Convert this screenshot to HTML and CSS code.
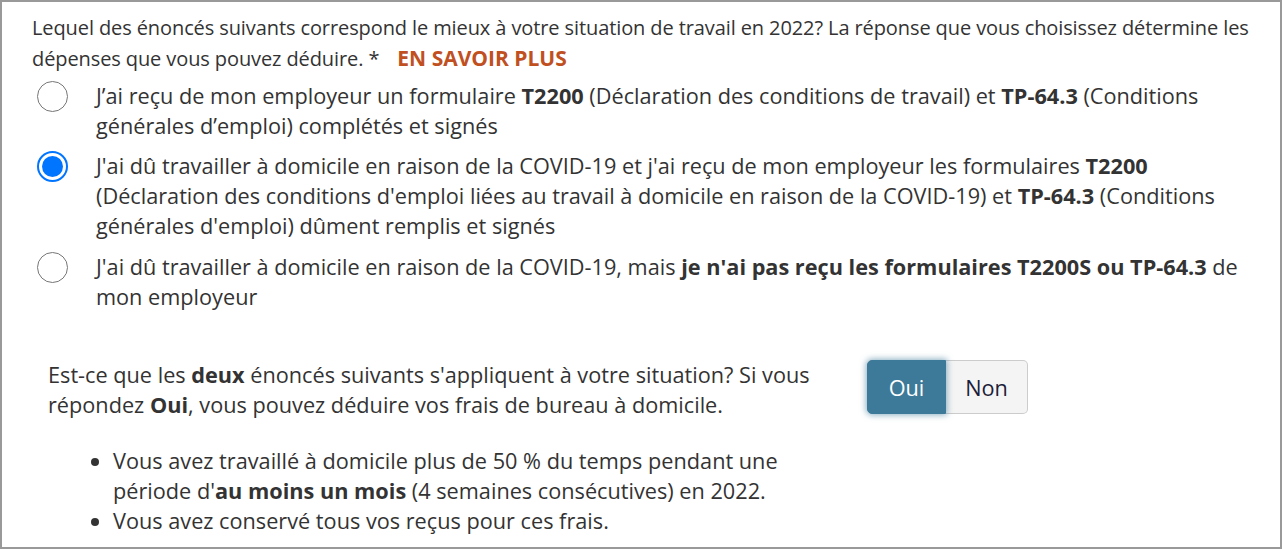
FILE: index.html
```html
<!DOCTYPE html>
<html lang="fr">
<head>
<meta charset="utf-8">
<title>Bureau à domicile</title>
<link rel="stylesheet" href="styles.css">
</head>
<body>
<div class="frame">
  <p class="question">Lequel des énoncés suivants correspond le mieux à votre situation de travail en 2022? La réponse que vous choisissez détermine les dépenses que vous pouvez déduire. *<a class="learn" href="#">EN SAVOIR PLUS</a></p>
  <div class="options">
    <label class="option">
      <span class="radio"></span>
      <span class="option-text">J’ai reçu de mon employeur un formulaire <b>T2200</b> (Déclaration des conditions de travail) et <b>TP-64.3</b> (Conditions générales d’emploi) complétés et signés</span>
    </label>
    <label class="option">
      <span class="radio checked"></span>
      <span class="option-text">J'ai dû travailler à domicile en raison de la COVID-19 et j'ai reçu de mon employeur les formulaires <b>T2200</b> (Déclaration des conditions d'emploi liées au travail à domicile en raison de la COVID-19) et <b>TP-64.3</b> (Conditions générales d'emploi) dûment remplis et signés</span>
    </label>
    <label class="option option-last">
      <span class="radio"></span>
      <span class="option-text">J'ai dû travailler à domicile en raison de la COVID-19, mais <b>je n'ai pas reçu les formulaires T2200S ou TP-64.3</b> de mon employeur</span>
    </label>
  </div>
  <div class="followup">
    <div class="followup-text">
      <p class="desc">Est-ce que les <b>deux</b> énoncés suivants s'appliquent à votre situation? Si vous répondez <b>Oui</b>, vous pouvez déduire vos frais de bureau à domicile.</p>
      <ul class="conditions">
        <li>Vous avez travaillé à domicile plus de 50 % du temps pendant une période d'<b>au moins un mois</b> (4 semaines consécutives) en 2022.</li>
        <li>Vous avez conservé tous vos reçus pour ces frais.</li>
      </ul>
    </div>
    <div class="toggle">
      <button class="btn btn-yes" type="button">Oui</button>
      <button class="btn btn-no" type="button">Non</button>
    </div>
  </div>
</div>
</body>
</html>
```
FILE: styles.css
```css
html, body {
  margin: 0;
  padding: 0;
  background: #fff;
}
body {
  font-family: "Open Sans", "Noto Sans", sans-serif;
  color: #333;
  font-size: 21.7px;
  line-height: 30px;
}
.frame {
  box-sizing: border-box;
  width: 1282px;
  height: 549px;
  border: 2px solid #999;
  padding: 11px 20px 0 30px;
  overflow: hidden;
}
.question {
  margin: 0;
  font-size: 20px;
  letter-spacing: -0.1px;
}
.learn {
  color: #c0501f;
  font-weight: 700;
  font-size: 21px;
  letter-spacing: 0;
  text-decoration: none;
  margin-left: 18px;
}
.options {
  display: flex;
  flex-direction: column;
  gap: 10px;
  margin-top: 7px;
}
.option {
  display: flex;
  align-items: flex-start;
}
.option-last {
  margin-top: 1px;
}
.radio {
  flex: none;
  box-sizing: border-box;
  width: 31px;
  height: 31px;
  margin: 0 28px 0 5px;
  border: 1.5px solid #767676;
  border-radius: 50%;
  background: #fff;
}
.radio.checked {
  border: 2.5px solid #0075ff;
  position: relative;
}
.radio.checked::after {
  content: "";
  position: absolute;
  left: 3px;
  top: 3px;
  right: 3px;
  bottom: 3px;
  border-radius: 50%;
  background: #0075ff;
}
.option-text b {
  font-weight: 700;
}
.followup {
  display: flex;
  align-items: flex-start;
  margin-top: 48px;
  padding-left: 16px;
}
.followup-text {
  width: 790px;
  flex: none;
}
.desc {
  margin: 0;
}
.conditions {
  margin: 26px 0 0;
  padding-left: 65px;
  width: 680px;
}
.toggle {
  display: flex;
  margin-left: 29px;
  border-radius: 5px;
}
.btn {
  font-family: "Open Sans", "Noto Sans", sans-serif;
  font-size: 21.7px;
  height: 54px;
  border: 1px solid #ccc;
  padding: 0;
  cursor: pointer;
}
.btn-yes {
  width: 79px;
  background: #3d7a99;
  border-color: #3d7a99;
  color: #fff;
  border-radius: 5px 0 0 5px;
  box-shadow: 0 0 6px 1px rgba(61, 122, 153, 0.6);
  position: relative;
}
.btn-no {
  width: 82px;
  background: #f4f4f4;
  color: #1c1c3a;
  border-left: none;
  border-radius: 0 5px 5px 0;
}
```
